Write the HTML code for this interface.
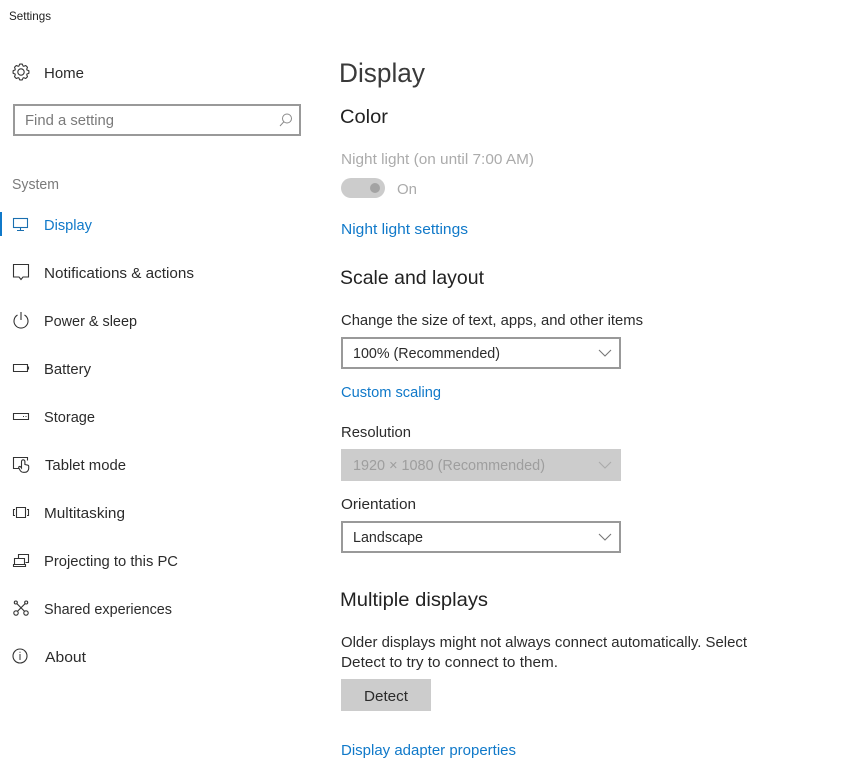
<!DOCTYPE html>
<html lang="en">
<head>
<meta charset="utf-8">
<title>Settings</title>
<style>
html,body{margin:0;padding:0;background:#fff;width:868px;height:780px;overflow:hidden}
svg{display:block}
text{font-family:"Liberation Sans",sans-serif;font-size:15px;fill:#2b2b2b;white-space:pre}
.s{font-size:12px;fill:#222}
.h{font-size:19.5px;fill:#222}
.t{font-size:27px;fill:#3a3a3a}
.b{fill:#1079c9}
.g{fill:#7a7a7a}
.d{fill:#ababab}
.dd{fill:#9e9e9e}
.i{fill:none;stroke:#333;stroke-width:1.1}
</style>
</head>
<body>
<svg width="868" height="780" viewBox="0 0 868 780" xmlns="http://www.w3.org/2000/svg">
<rect width="868" height="780" fill="#fff"/>

<text class="s" x="9" y="20" textLength="42" lengthAdjust="spacingAndGlyphs">Settings</text>

<!-- Home -->
<g class="i" stroke-linejoin="round">
<circle cx="21" cy="72" r="3.2"/>
<path d="M26.54 69.7L28.9 70.75V73.25L26.54 74.3"/>
<path d="M26.54 69.7L28.9 70.75V73.25L26.54 74.3" transform="rotate(45 21 72)"/>
<path d="M26.54 69.7L28.9 70.75V73.25L26.54 74.3" transform="rotate(90 21 72)"/>
<path d="M26.54 69.7L28.9 70.75V73.25L26.54 74.3" transform="rotate(135 21 72)"/>
<path d="M26.54 69.7L28.9 70.75V73.25L26.54 74.3" transform="rotate(180 21 72)"/>
<path d="M26.54 69.7L28.9 70.75V73.25L26.54 74.3" transform="rotate(225 21 72)"/>
<path d="M26.54 69.7L28.9 70.75V73.25L26.54 74.3" transform="rotate(270 21 72)"/>
<path d="M26.54 69.7L28.9 70.75V73.25L26.54 74.3" transform="rotate(315 21 72)"/>
</g>
<text x="44" y="78" textLength="40" lengthAdjust="spacingAndGlyphs">Home</text>

<!-- Search -->
<rect x="14" y="105" width="286" height="30" fill="#fff" stroke="#999" stroke-width="2"/>
<text class="g" x="25" y="125" textLength="89" lengthAdjust="spacingAndGlyphs">Find a setting</text>
<g fill="none" stroke="#8a8a8a" stroke-width="1">
<circle cx="287" cy="118.5" r="4.5"/>
<path d="M283.8 121.8L280 126"/>
</g>

<text class="g" x="12" y="189" textLength="47" lengthAdjust="spacingAndGlyphs">System</text>

<!-- Display -->
<rect x="0" y="212" width="2" height="24" fill="#1079c9"/>
<g fill="none" stroke="#1a6fb0" stroke-width="1.1">
<rect x="13.5" y="218.5" width="14" height="9"/>
<path d="M20.5 228v2M17 230.5h7"/>
</g>
<text class="b" x="44" y="230" textLength="48" lengthAdjust="spacingAndGlyphs">Display</text>

<!-- Notifications -->
<path class="i" d="M13.5 264.5h15v12.5h-5.5l-2 2.5-2-2.5h-5.500z"/>
<text x="44" y="278" textLength="150" lengthAdjust="spacingAndGlyphs">Notifications &amp; actions</text>

<!-- Power -->
<path class="i" d="M17.5 315a7 7 0 1 0 7 0M21 312v8"/>
<text x="44" y="326" textLength="93" lengthAdjust="spacingAndGlyphs">Power &amp; sleep</text>

<!-- Battery -->
<path class="i" d="M13.5 364.5h14v7h-14zM28.5 366.5v3"/>
<text x="44" y="374" textLength="47" lengthAdjust="spacingAndGlyphs">Battery</text>

<!-- Storage -->
<path class="i" d="M13.5 413.5h15v6h-15z"/>
<path d="M23 416h1v1h-1zM25.5 416h1v1h-1z" fill="#333"/>
<text x="44" y="422" textLength="51" lengthAdjust="spacingAndGlyphs">Storage</text>

<!-- Tablet mode -->
<path class="i" d="M20 468.5h-6.5v-11h14v3"/>
<path d="M21.5 468v-6.500a1.700 1.700 0 0 1 3.400 0v3l3 .7c.5.1.8.5.8 1v2.300a3.800 3.800 0 0 1-3.800 3.800h-1.500a3.800 3.800 0 0 1-3.200-1.800l-1.500-2.700a1.100 1.100 0 0 1 1.900-1z" fill="#fff" stroke="#333" stroke-width="1.100"/>
<text x="45" y="470" textLength="81" lengthAdjust="spacingAndGlyphs">Tablet mode</text>

<!-- Multitasking -->
<path class="i" d="M16.5 507.5h9v10h-9zM15 509.5h-1.500v6H15M27 509.5h1.500v6H27"/>
<text x="44" y="518" textLength="81" lengthAdjust="spacingAndGlyphs">Multitasking</text>

<!-- Projecting -->
<path class="i" d="M18.5 558v-3.500h10v8h-3M14.500 564.500v-6h10v6M13.500 566.500h12v-2h-12z"/>
<text x="44" y="566" textLength="134" lengthAdjust="spacingAndGlyphs">Projecting to this PC</text>

<!-- Shared -->
<g class="i">
<circle cx="15.8" cy="602.5" r="1.5"/>
<circle cx="26.2" cy="602.5" r="1.5"/>
<circle cx="16" cy="613" r="2.2"/>
<circle cx="26" cy="613" r="2.2"/>
<path d="M17 603.7l7.600 7.700M25 603.700l-7.600 7.700"/>
</g>
<text x="44" y="614" textLength="128" lengthAdjust="spacingAndGlyphs">Shared experiences</text>

<!-- About -->
<circle class="i" cx="20" cy="656" r="7"/>
<path d="M19.5 654h1v6h-1zM19.5 651.800h1v1h-1z" fill="#333"/>
<text x="45" y="662" textLength="41" lengthAdjust="spacingAndGlyphs">About</text>

<!-- Main -->
<text class="t" x="339" y="82" textLength="86" lengthAdjust="spacingAndGlyphs">Display</text>
<text class="h" x="340" y="123" textLength="48" lengthAdjust="spacingAndGlyphs">Color</text>

<text class="d" x="341" y="164" textLength="193" lengthAdjust="spacingAndGlyphs">Night light (on until 7:00 AM)</text>
<rect x="341" y="178" width="44" height="20" rx="10" fill="#cccccc"/>
<circle cx="375" cy="188" r="5" fill="#a3a3a3"/>
<text class="d" x="397" y="194" textLength="20" lengthAdjust="spacingAndGlyphs">On</text>
<text class="b" x="341" y="234" textLength="127" lengthAdjust="spacingAndGlyphs">Night light settings</text>

<text class="h" x="340" y="284" textLength="144" lengthAdjust="spacingAndGlyphs">Scale and layout</text>
<text x="341" y="325" textLength="302" lengthAdjust="spacingAndGlyphs">Change the size of text, apps, and other items</text>

<rect x="342" y="338" width="278" height="30" fill="#fff" stroke="#999" stroke-width="2"/>
<text x="353" y="358" textLength="147" lengthAdjust="spacingAndGlyphs">100% (Recommended)</text>
<path d="M599 350l6 6 6-6" fill="none" stroke="#777" stroke-width="1.1"/>

<text class="b" x="341" y="397" textLength="100" lengthAdjust="spacingAndGlyphs">Custom scaling</text>
<text x="341" y="437" textLength="70" lengthAdjust="spacingAndGlyphs">Resolution</text>

<rect x="341" y="449" width="280" height="32" fill="#cccccc"/>
<text class="dd" x="353" y="470" textLength="192" lengthAdjust="spacingAndGlyphs">1920 × 1080 (Recommended)</text>
<path d="M599 462l6 6 6-6" fill="none" stroke="#aaa" stroke-width="1.1"/>

<text x="341" y="509" textLength="75" lengthAdjust="spacingAndGlyphs">Orientation</text>
<rect x="342" y="522" width="278" height="30" fill="#fff" stroke="#999" stroke-width="2"/>
<text x="353" y="542" textLength="70" lengthAdjust="spacingAndGlyphs">Landscape</text>
<path d="M599 534l6 6 6-6" fill="none" stroke="#777" stroke-width="1.1"/>

<text class="h" x="340" y="606" textLength="148" lengthAdjust="spacingAndGlyphs">Multiple displays</text>
<text x="341" y="647" textLength="406" lengthAdjust="spacingAndGlyphs">Older displays might not always connect automatically. Select</text>
<text x="341" y="667" textLength="217" lengthAdjust="spacingAndGlyphs">Detect to try to connect to them.</text>

<rect x="341" y="679" width="90" height="32" fill="#cccccc"/>
<text x="364" y="701" textLength="44" lengthAdjust="spacingAndGlyphs">Detect</text>

<text class="b" x="341" y="755" textLength="175" lengthAdjust="spacingAndGlyphs">Display adapter properties</text>
</svg>
</body>
</html>
